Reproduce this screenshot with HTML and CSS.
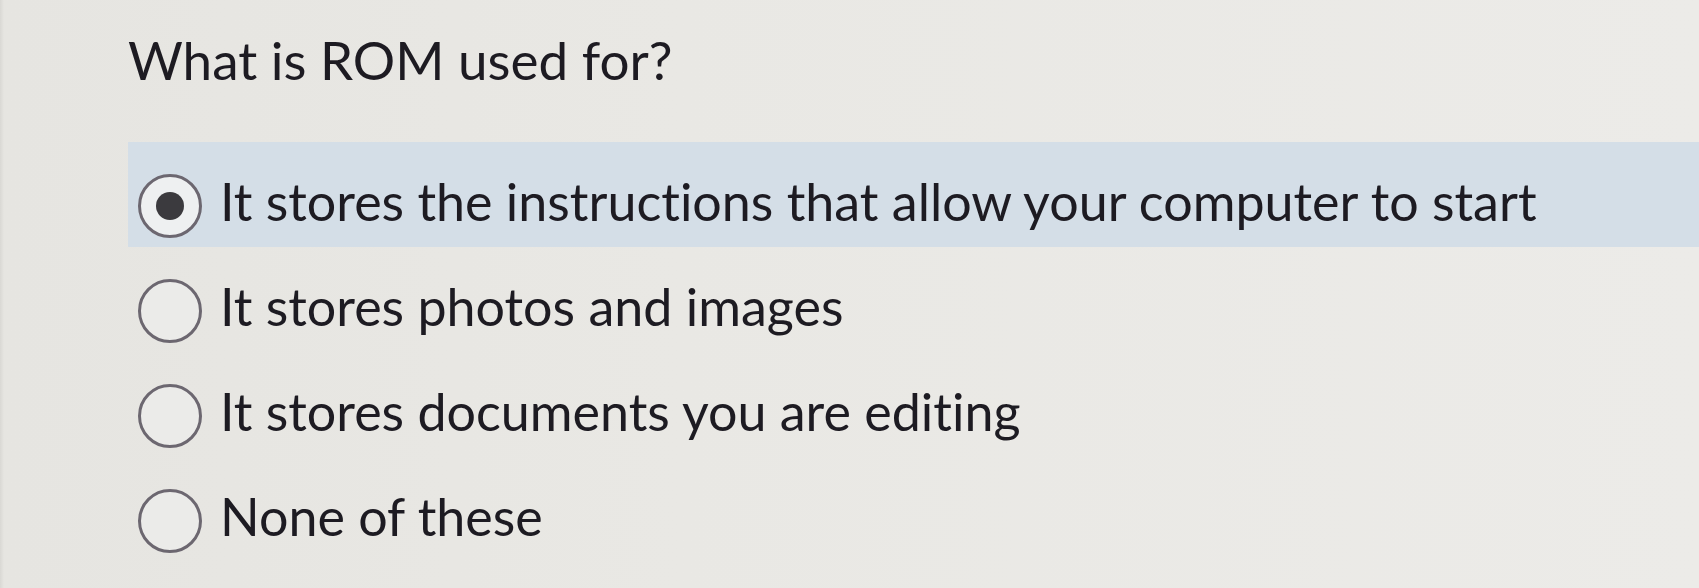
FILE: index.html
```html
<!DOCTYPE html>
<html lang="en">
<head>
<meta charset="utf-8">
<title>What is ROM used for?</title>
<link rel="stylesheet" href="styles.css">
</head>
<body>
<main class="page">
  <h1 class="question">What is ROM used for?</h1>
  <div class="options">
    <label class="option selected"><span class="radio"><span class="dot"></span></span><span class="label">It stores the instructions that allow your computer to start</span></label>
    <label class="option"><span class="radio"></span><span class="label">It stores photos and images</span></label>
    <label class="option"><span class="radio"></span><span class="label">It stores documents you are editing</span></label>
    <label class="option"><span class="radio"></span><span class="label">None of these</span></label>
  </div>
</main>
</body>
</html>
```
FILE: styles.css
```css
html, body {
  margin: 0;
  padding: 0;
}
body {
  width: 1699px;
  height: 588px;
  overflow: hidden;
  background: linear-gradient(90deg, #d9d8d4 0px, #e6e5e1 4px, #e9e8e4 40%, #ecebe8 100%);
  font-family: Lato, "Open Sans", sans-serif;
  font-variant-ligatures: none;
  color: #1d1b22;
}
.page {
  padding: 30px 0 0 128px;
}
.question {
  margin: 0;
  font-size: 53px;
  font-weight: 400;
  line-height: 60px;
}
.options {
  margin-top: 52px;
  display: flex;
  flex-direction: column;
}
.option {
  box-sizing: border-box;
  height: 105px;
  padding: 23px 0 0 10px;
  display: flex;
  align-items: center;
  gap: 18px;
}
.option.selected {
  background: #d4dee7;
}
.radio {
  box-sizing: border-box;
  width: 64px;
  height: 64px;
  border-radius: 50%;
  border: 3px solid #6c6770;
  background: #ebebe9;
  display: flex;
  align-items: center;
  justify-content: center;
  flex: none;
}
.selected .radio {
  background: #eef0f1;
}
.dot {
  width: 28px;
  height: 28px;
  border-radius: 50%;
  background: #3b3a3e;
}
.label {
  font-size: 52px;
  line-height: 60px;
  margin-top: -10px;
  white-space: nowrap;
}
```
